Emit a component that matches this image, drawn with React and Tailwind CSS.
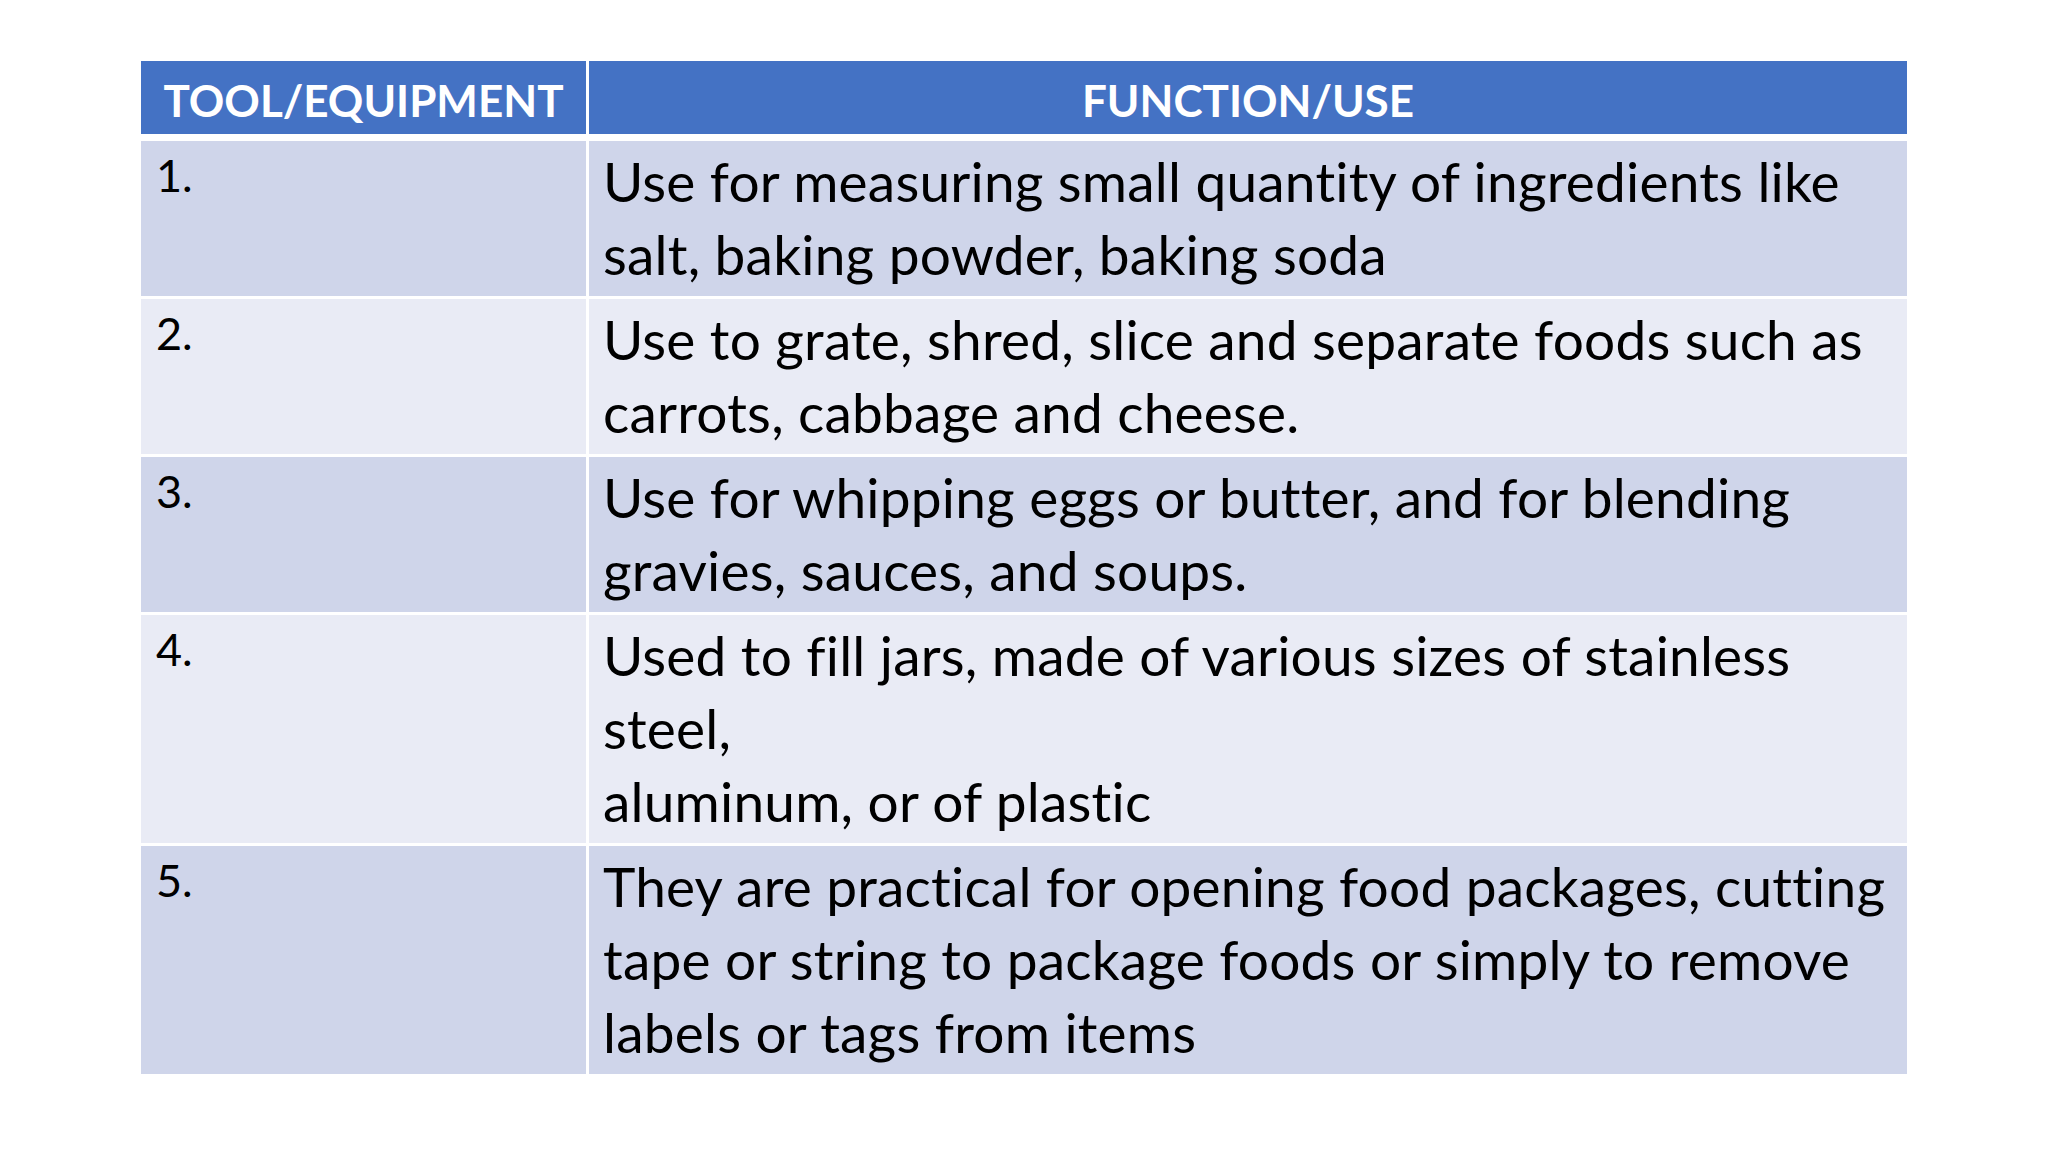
import React from "react";

const rows = [
  { n: "1.", lines: ["Use for measuring small quantity of ingredients like", "salt, baking powder, baking soda"] },
  { n: "2.", lines: ["Use to grate, shred, slice and separate foods such as", "carrots, cabbage and cheese."] },
  { n: "3.", lines: ["Use for whipping eggs or butter, and for blending", "gravies, sauces, and soups."] },
  { n: "4.", lines: ["Used to fill jars, made of various sizes of stainless", "steel,", "aluminum, or of plastic"] },
  { n: "5.", lines: ["They are practical for opening food packages, cutting", "tape or string to package foods or simply to remove", "labels or tags from items"] },
];

export default function App() {
  return (
    <div className="w-[2048px] h-[1152px] bg-white pt-[61px] pl-[141px] font-['Lato',_'Noto_Sans',_sans-serif] text-black">
      <div className="w-[1766px] flex flex-col">
        <div className="flex h-[73px] gap-x-[3px] mb-[7px]">
          <div className="w-[445px] bg-[#4472C4] flex items-center justify-center text-white font-bold text-[44px] pt-[4px]">
            TOOL/EQUIPMENT
          </div>
          <div className="flex-1 bg-[#4472C4] flex items-center justify-center text-white font-bold text-[44px] pt-[4px]">
            FUNCTION/USE
          </div>
        </div>
        <div className="flex flex-col gap-y-[3px]">
          {rows.map((r, i) => {
            const bg = i % 2 === 0 ? "bg-[#CFD5EA]" : "bg-[#E9EBF5]";
            return (
              <div key={r.n} className="flex gap-x-[3px]">
                <div className={`w-[445px] ${bg} pl-[15px] pt-[4px] text-[45px] leading-[60px]`}>{r.n}</div>
                <div className={`flex-1 ${bg} pl-[14px] pt-[4px] pb-[5px] text-[55px] tracking-[0.2px] leading-[73px] whitespace-nowrap`}>
                  {r.lines.map((l, j) => (
                    <div key={j}>{l}</div>
                  ))}
                </div>
              </div>
            );
          })}
        </div>
      </div>
    </div>
  );
}
